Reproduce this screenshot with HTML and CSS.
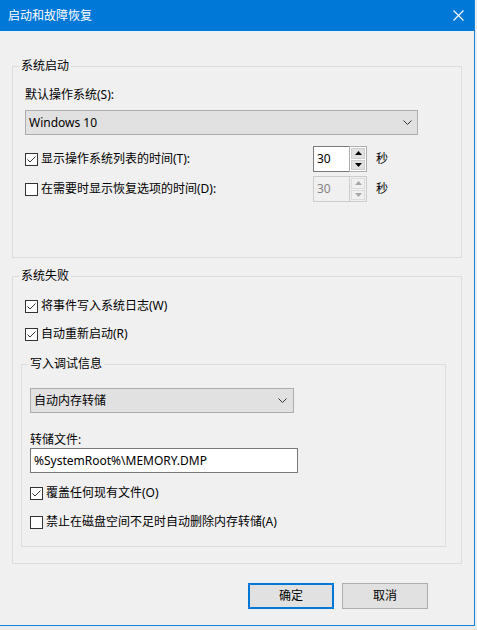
FILE: index.html
```html
<!DOCTYPE html>
<html lang="zh-CN">
<head>
<meta charset="utf-8">
<title>启动和故障恢复</title>
<link rel="stylesheet" href="styles.css">
</head>
<body>
<div class="window">
  <div class="titlebar">
    <span class="title">启动和故障恢复</span>
    <svg class="close" width="11" height="11" viewBox="0 0 11 11"><path d="M0.5 0.5L10.5 10.5M10.5 0.5L0.5 10.5" stroke="#fff" stroke-width="1.1" fill="none"/></svg>
  </div>
  <div class="content">
    <fieldset class="group g1">
      <legend>系统启动</legend>
      <div class="gbody1">
        <div class="label l-os">默认操作系统(S):</div>
        <div class="combo combo-os"><span>Windows 10</span><svg class="chev" width="9" height="5" viewBox="0 0 9 5"><path d="M0.5 0.5L4.5 4.5L8.5 0.5" stroke="#333" fill="none"/></svg></div>
        <div class="spin-row r1">
          <div class="check"><span class="box"><svg width="11" height="11" viewBox="0 0 11 11"><path d="M1.5 5.5L4 8L9.5 2.5" stroke="#333" fill="none"/></svg></span><span>显示操作系统列表的时间(T):</span></div>
          <div class="spin">
            <div class="spin-text">30</div>
            <div class="spin-btns">
              <div class="sb"><svg width="7" height="4" viewBox="0 0 7 4"><path d="M0 4L3.5 0L7 4Z" fill="#000"/></svg></div>
              <div class="sb"><svg width="7" height="4" viewBox="0 0 7 4"><path d="M0 0L3.5 4L7 0Z" fill="#000"/></svg></div>
            </div>
          </div>
          <span class="unit">秒</span>
        </div>
        <div class="spin-row r2">
          <div class="check"><span class="box"></span><span>在需要时显示恢复选项的时间(D):</span></div>
          <div class="spin disabled">
            <div class="spin-text">30</div>
            <div class="spin-btns">
              <div class="sb"><svg width="7" height="4" viewBox="0 0 7 4"><path d="M0 4L3.5 0L7 4Z" fill="#a6a6a6"/></svg></div>
              <div class="sb"><svg width="7" height="4" viewBox="0 0 7 4"><path d="M0 0L3.5 4L7 0Z" fill="#a6a6a6"/></svg></div>
            </div>
          </div>
          <span class="unit">秒</span>
        </div>
      </div>
    </fieldset>

    <fieldset class="group g2">
      <legend>系统失败</legend>
      <div class="gbody2">
        <div class="check cr cr1"><span class="box"><svg width="11" height="11" viewBox="0 0 11 11"><path d="M1.5 5.5L4 8L9.5 2.5" stroke="#333" fill="none"/></svg></span><span>将事件写入系统日志(W)</span></div>
        <div class="check cr cr2"><span class="box"><svg width="11" height="11" viewBox="0 0 11 11"><path d="M1.5 5.5L4 8L9.5 2.5" stroke="#333" fill="none"/></svg></span><span>自动重新启动(R)</span></div>
        <fieldset class="group g3">
          <legend>写入调试信息</legend>
          <div class="gbody3">
            <div class="combo combo-dump"><span>自动内存转储</span><svg class="chev" width="9" height="5" viewBox="0 0 9 5"><path d="M0.5 0.5L4.5 4.5L8.5 0.5" stroke="#333" fill="none"/></svg></div>
            <div class="label l-file">转储文件:</div>
            <div class="textbox">%SystemRoot%\MEMORY.DMP</div>
            <div class="check cr cr3"><span class="box"><svg width="11" height="11" viewBox="0 0 11 11"><path d="M1.5 5.5L4 8L9.5 2.5" stroke="#333" fill="none"/></svg></span><span>覆盖任何现有文件(O)</span></div>
            <div class="check cr cr4"><span class="box"></span><span>禁止在磁盘空间不足时自动删除内存转储(A)</span></div>
          </div>
        </fieldset>
      </div>
    </fieldset>

    <div class="buttons">
      <div class="btn default">确定</div>
      <div class="btn">取消</div>
    </div>
  </div>
</div>
</body>
</html>
```

FILE: styles.css
```css
* { box-sizing: border-box; }
html, body { margin: 0; padding: 0; }
body {
  width: 477px;
  height: 630px;
  overflow: hidden;
  background: #ececec;
  font-family: "Noto Sans", "Noto Sans CJK SC", sans-serif;
  font-size: 12px;
  color: #000;
}
.window {
  width: 475px;
  height: 626px;
  background: #f0f0f0;
  border-right: 1px solid #1883d7;
  border-bottom: 1px solid #1883d7;
  display: flex;
  flex-direction: column;
}
.titlebar {
  flex: none;
  height: 31px;
  background: #0078d7;
  color: #fff;
  display: flex;
  align-items: center;
  justify-content: space-between;
  padding: 0 10px 0 8px;
}
.title { line-height: 16px; }
.close { display: block; }

.content {
  flex: 1;
  display: flex;
  flex-direction: column;
  padding: 27px 0 0 12px;
}

fieldset.group {
  margin: 0;
  min-width: 0;
  border: 1px solid #dcdcdc;
  padding: 0 0 0 6px;
}
legend {
  padding: 0 2px;
  height: 16px;
  line-height: 16px;
}
.label { line-height: 16px; height: 16px; }

fieldset.g1 { width: 450px; padding-bottom: 55px; }
.gbody1 { padding-left: 6px; }
.l-os { margin-top: 13px; }

.combo {
  height: 25px;
  background: #e1e1e1;
  border: 1px solid #adadad;
  display: flex;
  align-items: center;
  justify-content: space-between;
  padding: 0 5px 0 3px;
  line-height: 16px;
}
.combo-os { margin-top: 7px; width: 393px; }
.combo-dump { margin-top: 16px; width: 264px; padding-right: 6px; }
.chev { display: block; }

.spin-row {
  display: flex;
  align-items: center;
  height: 26px;
}
.r1 { margin-top: 11px; }
.r2 { margin-top: 4px; }
.spin-row .check { width: 288px; }

.check {
  display: flex;
  align-items: center;
  line-height: 16px;
}
.box {
  width: 13px;
  height: 13px;
  border: 1px solid #333;
  background: #fff;
  margin-right: 3px;
  flex: none;
  display: block;
}
.box svg { display: block; }

.spin {
  width: 54px;
  height: 26px;
  display: flex;
  background: #fff;
}
.spin-text {
  flex: 1;
  border: 1px solid #7a7a7a;
  border-right: none;
  padding-left: 3px;
  line-height: 24px;
  font-size: 12px;
}
.spin-btns {
  width: 18px;
  border: 1px solid #adadad;
  padding: 1px;
  display: flex;
  flex-direction: column;
  gap: 1px;
  background: #fff;
}
.sb {
  flex: 1;
  background: #e1e1e1;
  border: 1px solid #cfcfcf;
  display: flex;
  align-items: center;
  justify-content: center;
}
.sb svg { display: block; }
.spin.disabled { background: #f0f0f0; }
.spin.disabled .spin-text { border-color: #cccccc; color: #838383; }
.spin.disabled .spin-btns { border-color: #cccccc; background: #f0f0f0; }
.spin.disabled .sb { background: #f0f0f0; border-color: #dcdcdc; }
.unit { margin-left: 9px; line-height: 16px; }

fieldset.g2 { width: 450px; margin-top: 10px; padding-bottom: 16px; }
.gbody2 { padding-left: 2px; }
.cr { height: 20px; }
.cr1 { margin-top: 12px; padding-left: 4px; }
.cr2 { margin-top: 8px; padding-left: 4px; }

fieldset.g3 { width: 425px; margin-top: 12px; padding-bottom: 14px; }
.gbody3 { padding-left: 2px; }
.l-file { margin-top: 19px; }
.textbox {
  width: 268px;
  height: 25px;
  background: #fff;
  border: 1px solid #7a7a7a;
  padding-left: 3px;
  line-height: 23px;
}
.cr3 { margin-top: 10px; }
.cr4 { margin-top: 9px; }

.buttons {
  display: flex;
  justify-content: flex-end;
  gap: 8px;
  margin-top: 19px;
  padding-right: 46px;
}
.btn {
  width: 86px;
  height: 26px;
  background: #e1e1e1;
  border: 1px solid #adadad;
  display: flex;
  align-items: center;
  justify-content: center;
  line-height: 16px;
}
.btn.default { border: 2px solid #0078d7; }
```
